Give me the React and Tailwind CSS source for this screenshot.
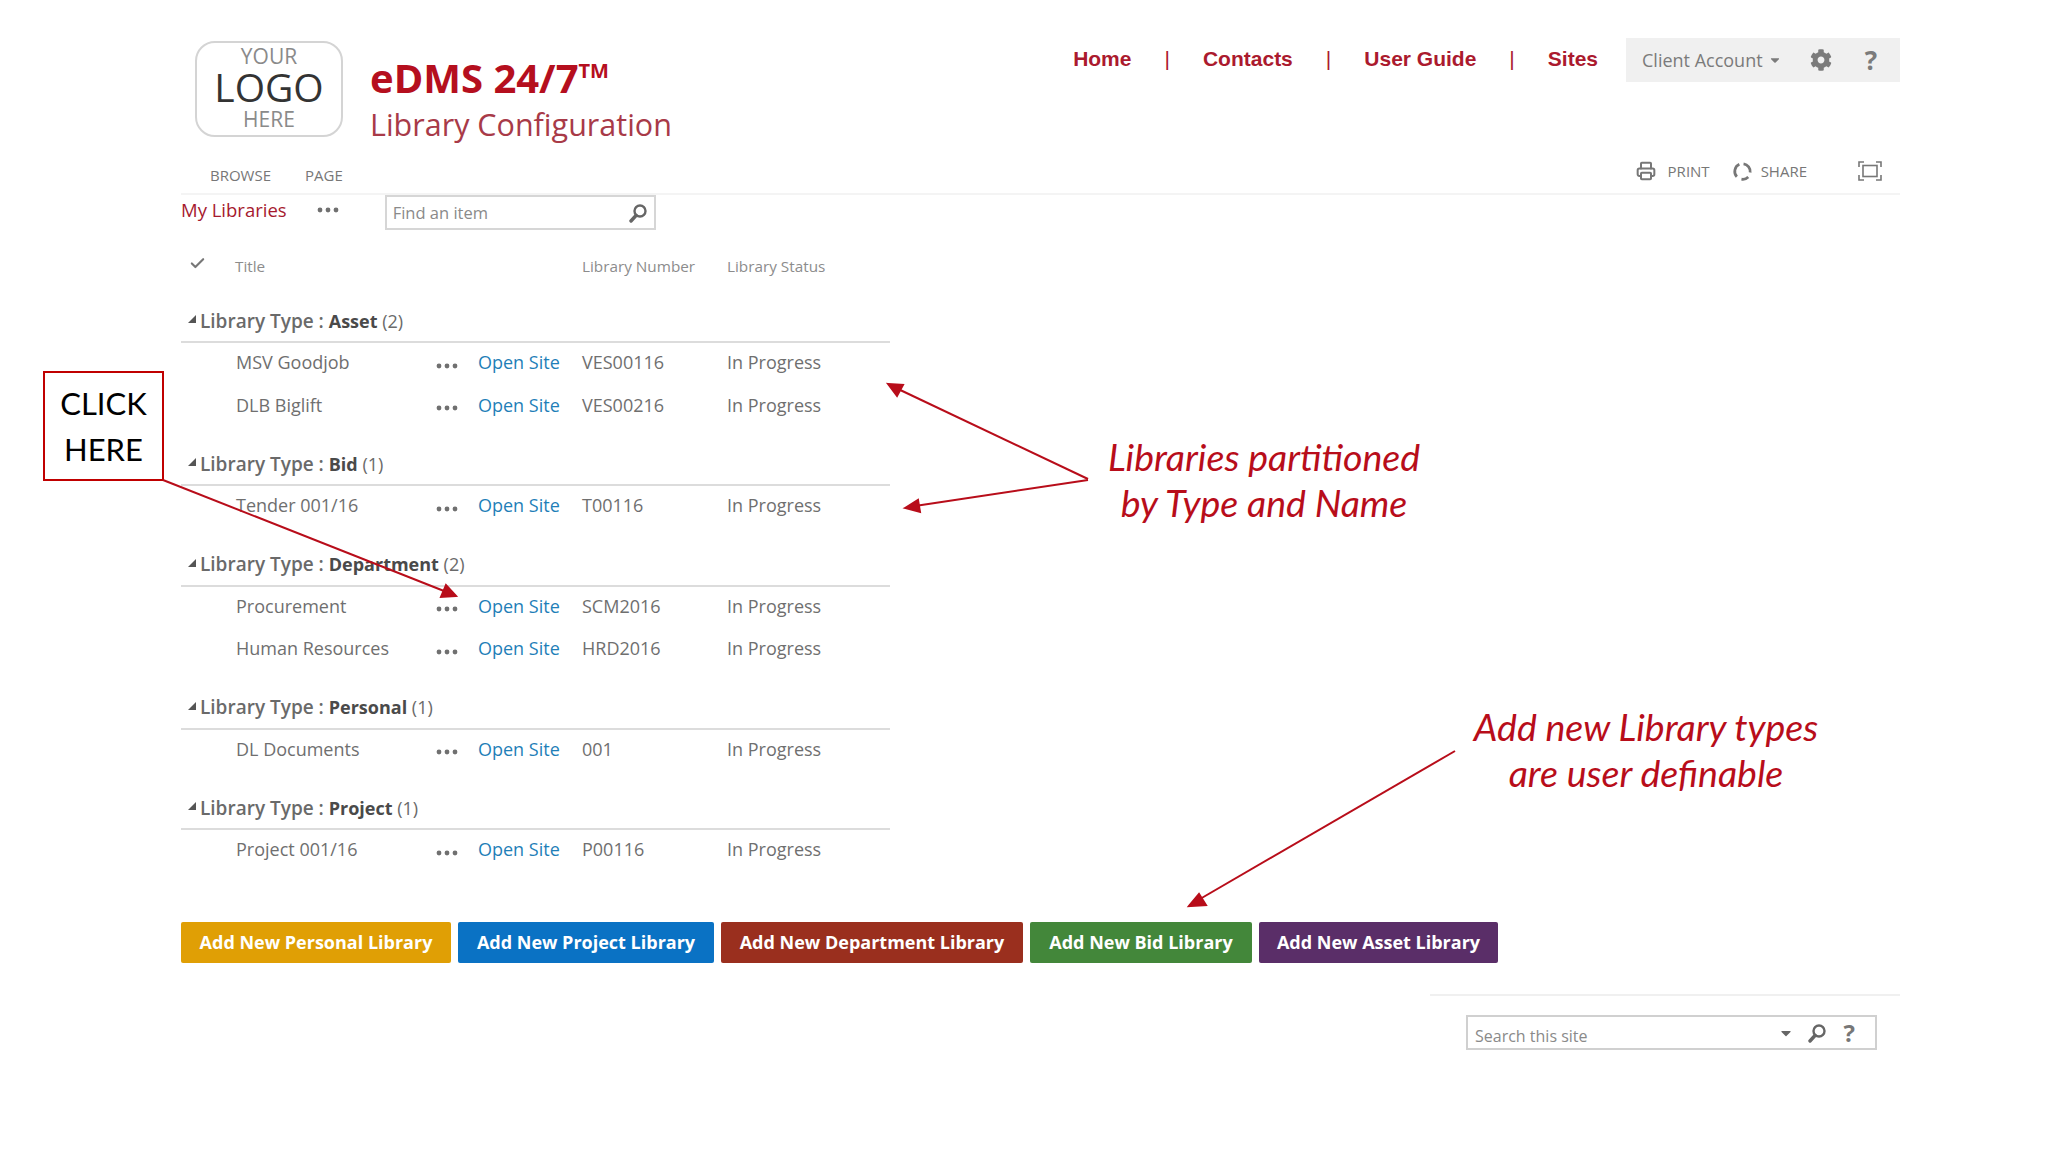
import React from 'react';
import { Check, Printer } from 'lucide-react';
import { FaCog, FaCaretDown } from 'react-icons/fa';

const groups = [
  { type: 'Asset', count: 2, rows: [['MSV Goodjob', 'VES00116'], ['DLB Biglift', 'VES00216']] },
  { type: 'Bid', count: 1, rows: [['Tender 001/16', 'T00116']] },
  { type: 'Department', count: 2, rows: [['Procurement', 'SCM2016'], ['Human Resources', 'HRD2016']] },
  { type: 'Personal', count: 1, rows: [['DL Documents', '001']] },
  { type: 'Project', count: 1, rows: [['Project 001/16', 'P00116']] },
];

const buttons = [
  { label: 'Add New Personal Library', className: 'w-[270px] bg-[#e09f05]' },
  { label: 'Add New Project Library', className: 'w-[256px] bg-[#0a72c4]' },
  { label: 'Add New Department Library', className: 'w-[302px] bg-[#9a2f1e]' },
  { label: 'Add New Bid Library', className: 'w-[222px] bg-[#43873a]' },
  { label: 'Add New Asset Library', className: 'w-[239px] bg-[#5a2e68]' },
];

function Lens({ className }) {
  return (
    <svg viewBox="0 0 20 20" className={className} fill="none" stroke="currentColor">
      <circle cx="12" cy="8" r="5.5" strokeWidth="2.4" />
      <path d="M8 12.5 3 18" strokeWidth="3.4" strokeLinecap="round" />
    </svg>
  );
}

function Dots() {
  return (
    <svg viewBox="0 0 22 6" className="h-[6px] w-[22px] text-[#707070]" fill="currentColor">
      <circle cx="3" cy="3" r="2.4" />
      <circle cx="11" cy="3" r="2.4" />
      <circle cx="19" cy="3" r="2.4" />
    </svg>
  );
}

function Group({ group }) {
  return (
    <div className="mb-[15px] w-[709px]">
      <div className="flex h-[43px] items-center border-b-2 border-[#dcdcdc] pl-[6px] pt-[1px] text-[19px] text-[#6a6a6a]">
        <svg viewBox="0 0 10 10" className="mb-[4px] mr-[3px] h-[10px] w-[10px] text-[#555555]" fill="currentColor">
          <polygon points="9,1 9,9 1,9" />
        </svg>
        <span className="font-semibold">Library Type :&nbsp;</span>
        <span className="text-[18px] font-bold text-[#4a4a4a]">{group.type}</span>
        <span className="text-[18px]">&nbsp;({group.count})</span>
      </div>
      {group.rows.map(([title, number]) => (
        <div key={title} className="flex h-[42.5px] items-center pb-[3px] text-[18px] text-[#6f6f6f]">
          <div className="w-[255px] pl-[55px]">{title}</div>
          <div className="flex w-[42px] items-center pt-[6px]"><Dots /></div>
          <div className="w-[104px] text-[#1f7fb8]">Open Site</div>
          <div className="w-[145px]">{number}</div>
          <div>In Progress</div>
        </div>
      ))}
    </div>
  );
}

export default function App() {
  return (
    <div className="relative h-[1152px] w-[2048px] overflow-hidden bg-white font-['Open_Sans',sans-serif]">
      <div className="flex flex-col pl-[181px] pr-[148px]">
        {/* Header */}
        <header className="flex h-[160px] items-start pt-[38px]">
          <div className="ml-[14px] mt-[3px] flex h-[96px] w-[148px] flex-col items-center justify-center rounded-[20px] border-2 border-[#d4d4d4] pb-[3px] leading-none">
            <span className="text-[21px] text-[#8a8a8a]">YOUR</span>
            <span className="text-[39px] text-[#333333]">LOGO</span>
            <span className="mt-[3px] text-[21px] text-[#8a8a8a]">HERE</span>
          </div>
          <div className="ml-[27px] mt-[16px]">
            <div className="flex items-start text-[40px] font-bold leading-[48px] text-[#b50f1e]">
              eDMS 24/7<span className="mt-[-3px] text-[20px] leading-[40px]">TM</span>
            </div>
            <div className="mt-[2px] text-[30.5px] leading-[40px] text-[#a83a48]">Library Configuration</div>
          </div>
          <nav className="ml-auto flex h-[42px] items-center font-['Liberation_Sans',sans-serif] text-[21px] font-bold text-[#ab1a2e]">
            <span>Home</span>
            <span className="mx-[33px] font-normal">|</span>
            <span>Contacts</span>
            <span className="mx-[33px] font-normal">|</span>
            <span>User Guide</span>
            <span className="mx-[33px] font-normal">|</span>
            <span>Sites</span>
          </nav>
          <div className="ml-[28px] flex h-[44px] w-[274px] items-center bg-[#f0f0f0] pl-[16px] text-[18px] text-[#7b7b7b]">
            <span>Client Account</span>
            <FaCaretDown className="ml-[5px] h-[14px] w-[14px]" />
            <FaCog className="ml-[28px] h-[22px] w-[22px]" />
            <span className="ml-[33px] text-[26px] font-bold">?</span>
          </div>
        </header>

        {/* Ribbon */}
        <div className="flex h-[35px] items-center border-b-2 border-[#f4f4f4] text-[15px] text-[#777777]">
          <span className="ml-[29px] pb-[2px]">BROWSE</span>
          <span className="ml-[34px] pb-[2px]">PAGE</span>
          <div className="ml-auto flex items-center pb-[11px]">
            <Printer className="h-[20px] w-[20px]" strokeWidth={2.4} />
            <span className="ml-[12px]">PRINT</span>
            <svg viewBox="0 0 20 20" className="ml-[22px] h-[21px] w-[21px]" fill="none" stroke="currentColor" strokeWidth="2.6">
              <path d="M7 3.2A7.4 7.4 0 0 0 4.6 15M9 17.3a7.4 7.4 0 0 0 6.5-2M17.3 11A7.4 7.4 0 0 0 11 2.7" />
            </svg>
            <span className="ml-[8px]">SHARE</span>
            <svg viewBox="0 0 24 20" className="ml-[51px] mr-[18px] h-[20px] w-[24px]" fill="none" stroke="currentColor" strokeWidth="1.6">
              <path d="M1 6V1h5M18 1h5v5M23 14v5h-5M6 19H1v-5" />
              <rect x="5" y="4.5" width="14" height="11" />
            </svg>
          </div>
        </div>

        {/* My Libraries + find */}
        <div className="flex h-[38px] items-center">
          <span className="mb-[8px] text-[18.5px] text-[#a6192e]">My Libraries</span>
          <div className="mb-[8px] ml-[30px]"><Dots /></div>
          <div className="mb-[3px] ml-[46px] flex h-[35px] w-[271px] items-center justify-between border-2 border-[#d6d6d6] pl-[6px] pr-[6px] text-[16.5px] text-[#8a8a8a]">
            <span className="pt-[2px]">Find an item</span>
            <Lens className="h-[20px] w-[20px] text-[#666666]" />
          </div>
        </div>

        {/* Column heads */}
        <div className="flex h-[67px] items-start pt-[22px] text-[15.3px] text-[#8c8c8c]">
          <Check className="ml-[8px] h-[17px] w-[17px] text-[#777777]" strokeWidth={3} />
          <span className="ml-[29px] w-[347px]">Title</span>
          <span className="w-[145px]">Library Number</span>
          <span>Library Status</span>
        </div>

        {groups.map((group) => <Group key={group.type} group={group} />)}

        {/* Add buttons */}
        <div className="mt-[34.5px] flex gap-[7px]">
          {buttons.map((b) => (
            <div key={b.label} className={`flex h-[41px] items-center justify-center rounded-[2px] text-[18px] font-bold text-white ${b.className}`}>
              {b.label}
            </div>
          ))}
        </div>

        {/* Footer search */}
        <div className="ml-auto mt-[31px] w-[470px] border-t-2 border-[#f0f0f0] pl-[36px] pt-[19px]">
          <div className="flex h-[35px] w-[411px] items-center border-2 border-[#d0d0d0] pl-[7px] pr-[20px] text-[16px] text-[#8a8a8a]">
            <span className="pt-[7px]">Search this site</span>
            <FaCaretDown className="ml-auto h-[16px] w-[16px] text-[#666666]" />
            <Lens className="ml-[13px] h-[20px] w-[20px] text-[#666666]" />
            <span className="ml-[17px] text-[24px] font-bold leading-none text-[#777777]">?</span>
          </div>
        </div>
      </div>

      {/* Annotations on top of the page */}
      <div className="absolute left-[43px] top-[371px] flex h-[110px] w-[121px] flex-col items-center justify-center border-2 border-[#c00000] bg-white font-['Lato',sans-serif] text-[31px] leading-[46px] text-black">
        <span>CLICK</span>
        <span>HERE</span>
      </div>
      <svg className="pointer-events-none absolute left-0 top-0 h-[1152px] w-[2048px]" viewBox="0 0 2048 1152" fill="none" stroke="#b80d1a" strokeWidth="2">
        <path d="M163 480 444 591" />
        <polygon points="456,596 441,597 446,585" fill="#b80d1a" />
        <path d="M1088 479 896 388" />
        <polygon points="888,384 903,385 897,396" fill="#b80d1a" />
        <path d="M1088 480 915 506" />
        <polygon points="905,508 918,500 920,512" fill="#b80d1a" />
        <path d="M1455 751 1200 899" />
        <polygon points="1189,906 1199,894 1206,905" fill="#b80d1a" />
      </svg>
      <div className="absolute left-[1059px] top-[434px] w-[410px] text-center font-['Lato',sans-serif] text-[37.5px] italic leading-[46px] text-[#b80d1a]">
        Libraries partitioned<br />by Type and Name
      </div>
      <div className="absolute left-[1441px] top-[704px] w-[410px] text-center font-['Lato',sans-serif] text-[37.5px] italic leading-[46px] text-[#b80d1a]">
        Add new Library types<br />are user definable
      </div>
    </div>
  );
}
